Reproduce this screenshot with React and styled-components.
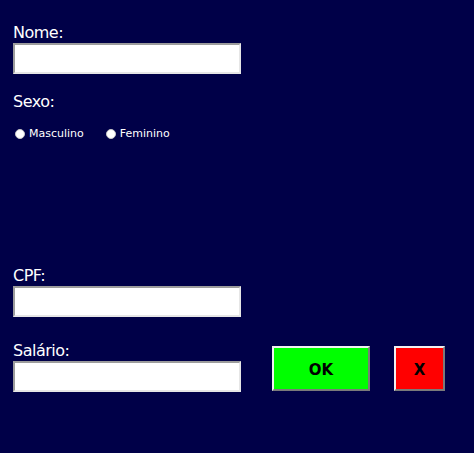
import styled, { createGlobalStyle } from 'styled-components';

const GlobalStyle = createGlobalStyle`
  html, body {
    margin: 0;
    padding: 0;
    background-color: #000048;
  }
`;

const Page = styled.main`
  width: 474px;
  height: 453px;
  box-sizing: border-box;
  padding: 24px 0 0 13px;
  background-color: #000048;
  color: #ffffff;
  font-family: 'DejaVu Sans', Verdana, sans-serif;
  display: flex;
  flex-direction: column;
`;

const Field = styled.div`
  display: flex;
  flex-direction: column;
  margin-top: ${(p) => p.$top || 0}px;
`;

const Label = styled.label`
  font-size: 16px;
  letter-spacing: -0.5px;
  line-height: 17px;
  margin-bottom: ${(p) => (p.$bare ? 0 : 2)}px;
`;

const TextInput = styled.input`
  box-sizing: border-box;
  width: 228px;
  height: 31px;
  margin: 0;
  padding: 2px 4px;
  background: #ffffff;
  border-style: solid;
  border-width: 2px;
  border-color: #9c9c9c #e6e6e6 #e6e6e6 #9c9c9c;
  font-family: 'DejaVu Sans', sans-serif;
  font-size: 13px;
  outline: none;
`;

const RadioRow = styled.div`
  display: flex;
  align-items: center;
  height: 14px;
  margin-top: 17px;
  padding-left: 2px;
  gap: 22px;
`;

const RadioOption = styled.label`
  display: flex;
  align-items: center;
  gap: 4px;
  font-size: 11px;
  line-height: 14px;
  color: #ffffff;
`;

const RadioDot = styled.span`
  box-sizing: border-box;
  width: 10px;
  height: 10px;
  border-radius: 50%;
  background: #ffffff;
  border: 1px solid #c8c8c8;
`;

const Spacer = styled.div`
  height: 126px;
`;

const BottomRow = styled.div`
  display: flex;
  align-items: flex-end;
  margin-top: 25px;
`;

const Button = styled.button`
  box-sizing: border-box;
  width: ${(p) => p.$width}px;
  height: 45px;
  margin: 0 0 1px ${(p) => p.$left}px;
  padding: 2px 0 0;
  background: ${(p) => p.$color};
  border-style: solid;
  border-width: 2px;
  border-color: #f0f0f0 #7a7a7a #7a7a7a #f0f0f0;
  font-family: 'DejaVu Sans', sans-serif;
  font-weight: bold;
  font-size: 15px;
  color: #000000;
`;

const App = () => (
  <>
    <GlobalStyle />
    <Page>
      <Field>
        <Label>Nome:</Label>
        <TextInput />
      </Field>
      <Field $top={19}>
        <Label $bare>Sexo:</Label>
      </Field>
      <RadioRow>
        <RadioOption>
          <RadioDot />
          Masculino
        </RadioOption>
        <RadioOption>
          <RadioDot />
          Feminino
        </RadioOption>
      </RadioRow>
      <Spacer />
      <Field>
        <Label>CPF:</Label>
        <TextInput />
      </Field>
      <BottomRow>
        <Field>
          <Label>Salário:</Label>
          <TextInput />
        </Field>
        <Button $width={98} $left={31} $color="#00ff00">OK</Button>
        <Button $width={51} $left={24} $color="#ff0000">X</Button>
      </BottomRow>
    </Page>
  </>
);

export default App;
